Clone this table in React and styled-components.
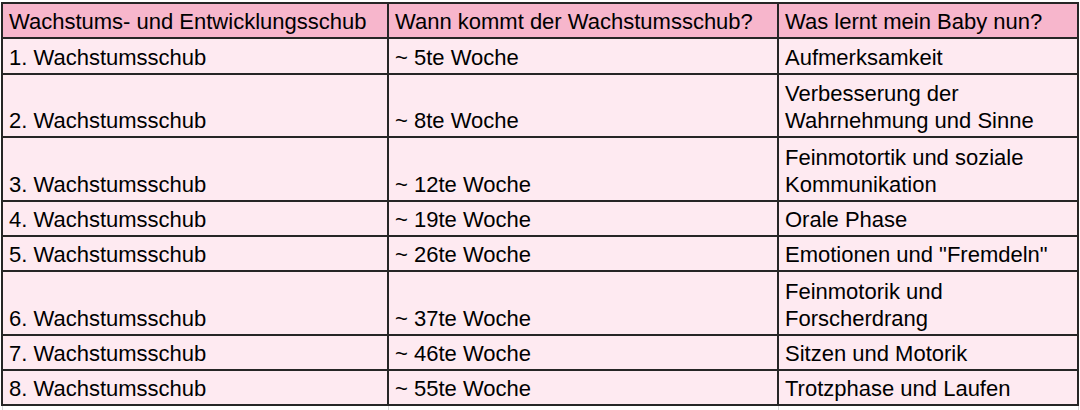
import React from 'react';
import styled, {createGlobalStyle} from 'styled-components';

const GlobalStyle = createGlobalStyle`
    html, body {
        margin: 0;
        padding: 0;
        background: #ffffff;
    }
`;

const Page = styled.div`
    padding: 2px 0 0 1px;
    width: 1080px;
    height: 410px;
    box-sizing: border-box;
    overflow: hidden;
    background: #ffffff;
`;

const Table = styled.table`
    border-collapse: collapse;
    table-layout: fixed;
    width: 1076px;
    font-family: "Liberation Sans", Arial, sans-serif;
    font-size: 22px;
    line-height: 27px;
    color: #000000;
`;

const Row = styled.tr`
    height: ${props => props.$h}px;
    background: ${props => props.$head ? '#f7b6cc' : '#feeaf1'};
`;

const Cell = styled.td`
    border: 2px solid #262626;
    padding: 0 4px 2px 6px;
    vertical-align: bottom;
    white-space: normal;
`;

// faint sheet gridlines that continue below the table
const GridTail = styled.tr`
    height: 6px;
    background: #ffffff;
`;

const TailCell = styled.td`
    padding: 0;
    border-left: 1px solid #d6d6d6;
    border-right: 1px solid #d6d6d6;
`;

const rows = [
    ['1. Wachstumsschub', '~ 5te Woche', 'Aufmerksamkeit', 36],
    ['2. Wachstumsschub', '~ 8te Woche', 'Verbesserung der Wahrnehmung und Sinne', 63],
    ['3. Wachstumsschub', '~ 12te Woche', 'Feinmotortik und soziale Kommunikation', 64],
    ['4. Wachstumsschub', '~ 19te Woche', 'Orale Phase', 35],
    ['5. Wachstumsschub', '~ 26te Woche', 'Emotionen und "Fremdeln"', 35],
    ['6. Wachstumsschub', '~ 37te Woche', 'Feinmotorik und Forscherdrang', 64],
    ['7. Wachstumsschub', '~ 46te Woche', 'Sitzen und Motorik', 35],
    ['8. Wachstumsschub', '~ 55te Woche', 'Trotzphase und Laufen', 35],
];

export default function App() {
    return (
        <Page>
            <GlobalStyle/>
            <Table>
                <colgroup>
                    <col style={{width: 386}}/>
                    <col style={{width: 390}}/>
                    <col style={{width: 300}}/>
                </colgroup>
                <tbody>
                <Row $head $h={35}>
                    <Cell>Wachstums- und Entwicklungsschub</Cell>
                    <Cell>Wann kommt der Wachstumsschub?</Cell>
                    <Cell>Was lernt mein Baby nun?</Cell>
                </Row>
                {rows.map(([schub, wann, was, h]) => (
                    <Row key={schub} $h={h}>
                        <Cell>{schub}</Cell>
                        <Cell>{wann}</Cell>
                        <Cell>{was}</Cell>
                    </Row>
                ))}
                <GridTail>
                    <TailCell/>
                    <TailCell/>
                    <TailCell/>
                </GridTail>
                </tbody>
            </Table>
        </Page>
    );
}
